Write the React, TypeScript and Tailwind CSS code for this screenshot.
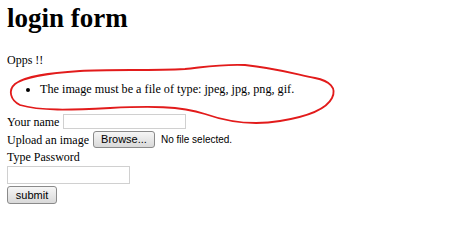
export default function App() {
  return (
    <div className="relative w-[474px] h-[226px] bg-white overflow-hidden text-black font-['Liberation_Serif',serif]">
      <div className="px-[7px] pt-[3px]">
        <h1 className="text-[27px] font-bold leading-[30px]">login form</h1>
        <p className="mt-[20px] text-[12px] leading-[14px]">Opps !!</p>
        <ul className="mt-[15px] pl-[33px] list-disc text-[12.2px] leading-[14px]">
          <li>The image must be a file of type: jpeg, jpg, png, gif.</li>
        </ul>

        {/* Form */}
        <form className="mt-[17px] text-[12px] leading-[14px]">
          <div className="flex items-center h-[17px] gap-[4px]">
            <label>Your name</label>
            <input type="text" className="w-[123px] h-[15px] border border-[#d0d0d0] bg-white" />
          </div>
          <div className="flex items-center h-[17px] gap-[4px] mt-[1px]">
            <label>Upload an image</label>
            <button
              type="button"
              className="w-[62px] h-[17px] border border-[#8a8a8a] rounded-[3px] bg-gradient-to-b from-[#f6f6f6] to-[#d9d9d9] font-['Liberation_Sans',sans-serif] text-[11px] leading-[15px] text-black"
            >
              Browse...
            </button>
            <span className="ml-[2px] font-['Liberation_Sans',sans-serif] text-[10px]">No file selected.</span>
          </div>
          <div className="mt-[2px]">Type Password</div>
          <input type="password" className="block mt-[2px] w-[123px] h-[18px] border border-[#d0d0d0] bg-white" />
          <button
            type="submit"
            className="block mt-[2px] w-[50px] h-[18px] border border-[#8a8a8a] rounded-[3px] bg-gradient-to-b from-[#f6f6f6] to-[#d9d9d9] font-['Liberation_Sans',sans-serif] text-[11px] leading-[16px] text-black"
          >
            submit
          </button>
        </form>
      </div>

      {/* hand-drawn red annotation */}
      <svg className="absolute inset-0 pointer-events-none" width="474" height="226" viewBox="0 0 474 226">
        <path
          d="M20 105 C40 111 70 110 110 108 C150 106 180 106 205 114 C225 121 250 126 280 121 C305 117 326 110 332 98 C337 88 330 81 315 78 C295 74 275 68 245 65 C220 64 205 67 185 69 C150 71 110 69 80 71 C50 73 25 76 15 84 C8 90 10 100 20 105"
          fill="none"
          stroke="#e21b1b"
          strokeWidth="1.8"
          strokeLinecap="round"
        />
      </svg>
    </div>
  );
}
